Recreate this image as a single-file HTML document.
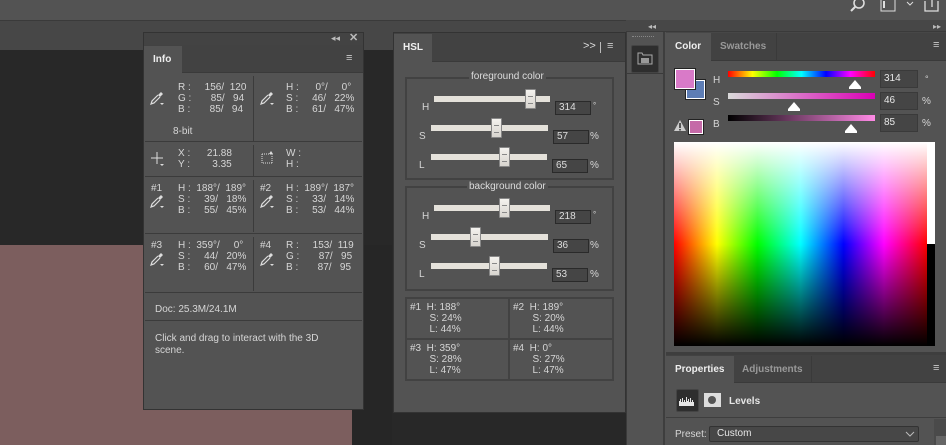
<!DOCTYPE html><html><head><meta charset="utf-8"><style>
*{margin:0;padding:0;box-sizing:border-box}
body{width:946px;height:445px;overflow:hidden;background:#282828;font-family:"Liberation Sans",sans-serif;font-size:10px;color:#d6d6d6;position:relative}
.a{position:absolute}
.t{position:absolute;white-space:pre;line-height:11px}
.hl{position:absolute;height:1px;background:#3b3b3b}
.vl{position:absolute;width:1px;background:#3b3b3b}
.trk{position:absolute;height:6px;background:#e4e1da}
.th{position:absolute;width:11px;height:20px;background:linear-gradient(#f4f2ee,#d8d5cf);border:1px solid #888;border-radius:1px}
.th:after{content:"";position:absolute;left:2px;top:6px;width:5px;height:6px;border-top:1px solid #888;border-bottom:1px solid #888}
.inp{position:absolute;background:#454545;border:1px solid #2a2a2a;color:#ddd;padding-left:3px;line-height:12px;font-size:10px}
.cin{position:absolute;background:#454545;border:1px solid #3a3a3a;color:#e8e8e8;padding-left:3px;line-height:16px;font-size:10px;width:38px;height:18px}
.tri{position:absolute;width:0;height:0;border-left:6px solid transparent;border-right:6px solid transparent;border-bottom:7px solid #fff}
</style></head><body>
<!-- top bar -->
<div class="a" style="left:0;top:0;width:946px;height:20px;background:#535353"></div>
<div class="a" style="left:0;top:20px;width:946px;height:30px;background:#474747;border-top:1px solid #3a3a3a"></div>
<div class="a" style="left:0;top:245px;width:352px;height:200px;background:#7c5e5e"></div>
<div class="a" style="left:352px;top:245px;width:40px;height:200px;background:#262626"></div>
<!-- top right icons -->
<svg class="a" style="left:845px;top:0" width="100" height="14"><circle cx="14" cy="3" r="5" fill="none" stroke="#ddd" stroke-width="1.6"/><line x1="10" y1="7" x2="6" y2="11" stroke="#ddd" stroke-width="2"/><rect x="36" y="-2" width="14" height="13" fill="none" stroke="#ddd"/><rect x="38" y="1" width="2" height="7" fill="#ddd"/><path d="M62 2l3 3 3-3" fill="none" stroke="#ddd"/><path d="M80 1v10h13V1M87 0v7" fill="none" stroke="#ddd" stroke-width="1.3"/></svg>

<!-- INFO PANEL -->
<div class="a" style="left:143px;top:32px;width:221px;height:378px;background:#535353;border:1px solid #333"></div>
<div class="a" style="left:144px;top:33px;width:219px;height:12px;background:#434343"></div>
<div class="t" style="left:331px;top:33px;font-size:9px;color:#bbb">◂◂</div>
<div class="t" style="left:349px;top:33px;font-size:11px;color:#bbb;font-weight:bold">✕</div>
<div class="a" style="left:144px;top:45px;width:219px;height:28px;background:#424242;border-bottom:1px solid #3a3a3a"></div>
<div class="a" style="left:144px;top:46px;width:38px;height:28px;background:#535353"></div>
<div class="t" style="left:153px;top:54px;font-weight:bold;color:#eee">Info</div>
<div class="t" style="left:346px;top:53px;font-size:11px;color:#ccc">≡</div>
<div class="vl" style="left:253px;top:76px;height:65px"></div>
<div class="hl" style="left:145px;top:141px;width:217px"></div>
<div class="vl" style="left:253px;top:145px;height:31px"></div>
<div class="hl" style="left:145px;top:176px;width:217px"></div>
<div class="vl" style="left:253px;top:180px;height:52px"></div>
<div class="hl" style="left:145px;top:233px;width:217px"></div>
<div class="vl" style="left:253px;top:237px;height:54px"></div>
<div class="hl" style="left:145px;top:292px;width:217px"></div>
<div class="hl" style="left:145px;top:320px;width:217px"></div>
<svg width="0" height="0" style="position:absolute"><defs><g id="ed"><path d="M11 1l2 2-3 3-2-2z" fill="#ddd"/><path d="M8 4l-6 6-1 3 3-1 6-6" fill="none" stroke="#ddd" stroke-width="1.2"/><path d="M10 12h4l-2 2z" fill="#ddd"/></g></defs></svg>
<svg class="a" style="left:150px;top:91px" width="16" height="16"><use href="#ed"/></svg>
<svg class="a" style="left:260px;top:91px" width="16" height="16"><use href="#ed"/></svg>
<svg class="a" style="left:150px;top:194px" width="16" height="16"><use href="#ed"/></svg>
<svg class="a" style="left:260px;top:194px" width="16" height="16"><use href="#ed"/></svg>
<svg class="a" style="left:150px;top:252px" width="16" height="16"><use href="#ed"/></svg>
<svg class="a" style="left:260px;top:252px" width="16" height="16"><use href="#ed"/></svg>
<div class="t" style="left:178px;top:82px">R :     156/  120
G :       85/   94
B :       85/   94</div>
<div class="t" style="left:286px;top:82px">H :      0°/     0°
S :     46/   22%
B :     61/   47%</div>
<div class="t" style="left:173px;top:126px">8-bit</div>
<svg class="a" style="left:150px;top:150px" width="16" height="16"><path d="M1 8h12M7 2v12" stroke="#ddd"/><path d="M10 14h4l-2 2z" fill="#ddd"/></svg>
<div class="t" style="left:178px;top:148px">X :      21.88
Y :        3.35</div>
<svg class="a" style="left:260px;top:150px" width="16" height="16"><path d="M2 4h10v9M2 4v9h10" fill="none" stroke="#ddd" stroke-dasharray="1 1"/><path d="M11 1l2 3h-4z" fill="#ddd"/></svg>
<div class="t" style="left:286px;top:148px">W :
H :</div>
<div class="t" style="left:151px;top:183px">#1</div>
<div class="t" style="left:178px;top:183px">H :  188°/  189°
S :     39/   18%
B :     55/   45%</div>
<div class="t" style="left:260px;top:183px">#2</div>
<div class="t" style="left:286px;top:183px">H :  189°/  187°
S :     33/   14%
B :     53/   44%</div>
<div class="t" style="left:151px;top:240px">#3</div>
<div class="t" style="left:178px;top:240px">H :  359°/     0°
S :     44/   20%
B :     60/   47%</div>
<div class="t" style="left:260px;top:240px">#4</div>
<div class="t" style="left:286px;top:240px">R :     153/  119
G :       87/   95
B :       87/   95</div>
<div class="t" style="left:155px;top:304px">Doc: 25.3M/24.1M</div>
<div class="t" style="left:155px;top:333px;line-height:12px">Click and drag to interact with the 3D
scene.</div>

<!-- HSL PANEL -->
<div class="a" style="left:393px;top:32px;width:233px;height:381px;background:#535353;border:1px solid #333"></div>
<div class="a" style="left:394px;top:33px;width:231px;height:29px;background:#424242;border-bottom:1px solid #3a3a3a"></div>
<div class="a" style="left:394px;top:34px;width:38px;height:29px;background:#535353"></div>
<div class="t" style="left:403px;top:42px;font-weight:bold;color:#eee">HSL</div>
<div class="t" style="left:583px;top:41px;font-size:11px;color:#ddd">&gt;&gt;</div>
<div class="a" style="left:600px;top:42px;width:1px;height:11px;background:#bbb"></div>
<div class="t" style="left:607px;top:41px;font-size:11px;color:#ccc">≡</div>
<div class="a" style="left:405px;top:77px;width:209px;height:103px;border:2px solid #424242"></div>
<div class="a" style="left:469px;top:71px;background:#535353;padding:0 2px;color:#ddd;line-height:11px">foreground color</div>
<div class="a" style="left:405px;top:186px;width:209px;height:105px;border:2px solid #424242"></div>
<div class="a" style="left:467px;top:181px;background:#535353;padding:0 2px;color:#ddd;line-height:11px">background color</div>
<div class="trk" style="left:434px;top:96px;width:116px"></div><div class="th" style="left:525px;top:89px"></div>
<div class="t" style="left:422px;top:102px">H</div><div class="inp" style="left:555px;top:101px;width:36px;height:14px">314</div><div class="t" style="left:593px;top:100px;font-size:8px">°</div>
<div class="trk" style="left:431px;top:125px;width:117px"></div><div class="th" style="left:491px;top:118px"></div>
<div class="t" style="left:419px;top:131px">S</div><div class="inp" style="left:553px;top:130px;width:36px;height:14px">57</div><div class="t" style="left:590px;top:131px">%</div>
<div class="trk" style="left:431px;top:154px;width:116px"></div><div class="th" style="left:499px;top:147px"></div>
<div class="t" style="left:419px;top:160px">L</div><div class="inp" style="left:552px;top:159px;width:36px;height:14px">65</div><div class="t" style="left:590px;top:160px">%</div>
<div class="trk" style="left:434px;top:205px;width:116px"></div><div class="th" style="left:499px;top:198px"></div>
<div class="t" style="left:422px;top:211px">H</div><div class="inp" style="left:555px;top:210px;width:36px;height:14px">218</div><div class="t" style="left:593px;top:209px;font-size:8px">°</div>
<div class="trk" style="left:431px;top:234px;width:117px"></div><div class="th" style="left:470px;top:227px"></div>
<div class="t" style="left:419px;top:240px">S</div><div class="inp" style="left:553px;top:239px;width:36px;height:14px">36</div><div class="t" style="left:590px;top:240px">%</div>
<div class="trk" style="left:431px;top:263px;width:116px"></div><div class="th" style="left:489px;top:256px"></div>
<div class="t" style="left:419px;top:269px">L</div><div class="inp" style="left:552px;top:268px;width:36px;height:14px">53</div><div class="t" style="left:590px;top:269px">%</div>
<div class="a" style="left:405px;top:297px;width:209px;height:84px;border:2px solid #424242"></div>
<div class="a" style="left:508px;top:298px;width:2px;height:82px;background:#424242"></div>
<div class="a" style="left:406px;top:338px;width:207px;height:2px;background:#424242"></div>
<div class="t" style="left:410px;top:302px">#1  H: 188°
       S: 24%
       L: 44%</div>
<div class="t" style="left:513px;top:302px">#2  H: 189°
       S: 20%
       L: 44%</div>
<div class="t" style="left:410px;top:343px">#3  H: 359°
       S: 28%
       L: 47%</div>
<div class="t" style="left:513px;top:343px">#4  H: 0°
       S: 27%
       L: 47%</div>

<!-- middle column -->
<div class="a" style="left:626px;top:20px;width:40px;height:425px;background:#535353;border-left:1px solid #3a3a3a"></div>
<div class="a" style="left:626px;top:20px;width:320px;height:12px;background:#474747;border-bottom:1px solid #3a3a3a"></div>
<div class="t" style="left:648px;top:21px;font-size:8px;color:#bbb">◂◂</div>
<div class="t" style="left:933px;top:21px;font-size:8px;color:#bbb">▸▸</div>
<div class="a" style="left:632px;top:36px;width:22px;height:3px;border-top:1px dotted #888"></div>
<div class="a" style="left:631px;top:45px;width:28px;height:28px;background:#2e2e2e;border:1px solid #444;border-radius:2px"></div>
<svg class="a" style="left:637px;top:50px" width="16" height="16"><path d="M1 3h4l1 2h9v9H1z" fill="none" stroke="#aaa"/><rect x="4" y="8" width="8" height="5" fill="#999"/></svg>
<div class="a" style="left:626px;top:73px;width:37px;height:1px;background:#3a3a3a"></div>
<div class="a" style="left:663px;top:32px;width:2px;height:413px;background:#3e3e3e"></div>

<!-- COLOR PANEL -->
<div class="a" style="left:666px;top:33px;width:280px;height:320px;background:#535353"></div>
<div class="a" style="left:666px;top:33px;width:280px;height:28px;background:#424242;border-bottom:1px solid #3a3a3a"></div>
<div class="a" style="left:666px;top:33px;width:45px;height:29px;background:#535353"></div>
<div class="a" style="left:711px;top:33px;width:66px;height:28px;border-right:1px solid #3a3a3a"></div>
<div class="t" style="left:675px;top:41px;font-weight:bold;color:#eee">Color</div>
<div class="t" style="left:720px;top:41px;font-weight:bold;color:#999">Swatches</div>
<div class="t" style="left:933px;top:40px;font-size:11px;color:#ccc">≡</div>
<div class="a" style="left:686px;top:80px;width:19px;height:19px;background:#5d7db5;border:1px solid #fff;outline:1px solid #222"></div>
<div class="a" style="left:675px;top:69px;width:20px;height:20px;background:#d97ac8;border:1px solid #fff;outline:1px solid #222"></div>
<div class="t" style="left:713px;top:75px">H</div>
<div class="t" style="left:713px;top:97px">S</div>
<div class="t" style="left:713px;top:119px">B</div>
<div class="a" style="left:728px;top:71px;width:147px;height:6px;background:linear-gradient(90deg,#f00,#ff0,#0f0,#0ff,#00f,#f0f,#f00)"></div>
<div class="a" style="left:728px;top:93px;width:147px;height:6px;background:linear-gradient(90deg,#d9d9d9,#d900b5)"></div>
<div class="a" style="left:728px;top:115px;width:147px;height:6px;background:linear-gradient(90deg,#000,#ff8ae6)"></div>
<div class="tri" style="left:849px;top:80px"></div><div class="a" style="left:849px;top:87px;width:12px;height:2px;background:#fff"></div>
<div class="tri" style="left:788px;top:102px"></div><div class="a" style="left:788px;top:109px;width:12px;height:2px;background:#fff"></div>
<div class="tri" style="left:845px;top:124px"></div><div class="a" style="left:845px;top:131px;width:12px;height:2px;background:#fff"></div>
<div class="cin" style="left:880px;top:70px">314</div><div class="t" style="left:925px;top:74px;font-size:9px">°</div>
<div class="cin" style="left:880px;top:92px">46</div><div class="t" style="left:922px;top:96px">%</div>
<div class="cin" style="left:880px;top:114px">85</div><div class="t" style="left:922px;top:118px">%</div>
<svg class="a" style="left:674px;top:120px" width="12" height="12"><path d="M6 0l6 11H0z" fill="#ccc"/><rect x="5" y="3" width="2" height="5" fill="#535353"/><rect x="5" y="9" width="2" height="1.5" fill="#535353"/></svg>
<div class="a" style="left:689px;top:120px;width:14px;height:14px;background:#c56aa8;border:1px solid #fff;outline:1px solid #222"></div>
<div class="a" style="left:674px;top:142px;width:253px;height:204px;background:linear-gradient(#fff,rgba(255,255,255,0) 50%,rgba(0,0,0,0) 50%,#000),linear-gradient(90deg,#f00,#ff0 17%,#0f0 33%,#0ff 50%,#00f 67%,#f0f 83%,#f00)"></div>
<div class="a" style="left:927px;top:142px;width:8px;height:102px;background:#fff"></div>
<div class="a" style="left:927px;top:244px;width:8px;height:102px;background:#000"></div>
<div class="a" style="left:666px;top:352px;width:280px;height:3px;background:#3e3e3e"></div>

<!-- PROPERTIES -->
<div class="a" style="left:666px;top:355px;width:280px;height:90px;background:#535353"></div>
<div class="a" style="left:666px;top:355px;width:280px;height:28px;background:#424242;border-bottom:1px solid #3a3a3a"></div>
<div class="a" style="left:666px;top:356px;width:68px;height:28px;background:#535353"></div>
<div class="a" style="left:734px;top:356px;width:78px;height:27px;border-right:1px solid #3a3a3a"></div>
<div class="t" style="left:675px;top:364px;font-weight:bold;color:#eee">Properties</div>
<div class="t" style="left:742px;top:364px;font-weight:bold;color:#999">Adjustments</div>
<div class="t" style="left:933px;top:363px;font-size:11px;color:#ccc">≡</div>
<div class="a" style="left:676px;top:389px;width:23px;height:23px;background:#2e2e2e;border:1px solid #444;border-radius:2px"></div>
<svg class="a" style="left:678px;top:396px" width="20" height="10"><path d="M1 10V5h1V3h1v3h1V2h1v4h1V4h1v2h1V1h1v4h1V3h1v3h1V2h1v4h1V4h1v2h1v4z" fill="#e6e6e6"/></svg>
<div class="a" style="left:704px;top:393px;width:17px;height:14px;background:#ddd"></div>
<div class="a" style="left:708px;top:396px;width:8px;height:8px;background:#555;border-radius:50%"></div>
<div class="t" style="left:729px;top:396px;font-weight:bold;color:#e6e6e6">Levels</div>
<div class="a" style="left:666px;top:417px;width:280px;height:1px;background:#3e3e3e"></div>
<div class="t" style="left:675px;top:429px">Preset:</div>
<div class="a" style="left:709px;top:426px;width:210px;height:16px;background:#474747;border:1px solid #333;border-radius:2px"></div>
<div class="t" style="left:717px;top:428px;color:#e6e6e6">Custom</div>
<svg class="a" style="left:905px;top:431px" width="10" height="6"><path d="M1 1l4 4 4-4" fill="none" stroke="#bbb"/></svg>
<div class="a" style="left:934px;top:419px;width:12px;height:26px;background:#4a4a4a"></div>
<div class="a" style="left:936px;top:436px;width:10px;height:9px;background:#666"></div>
</body></html>
